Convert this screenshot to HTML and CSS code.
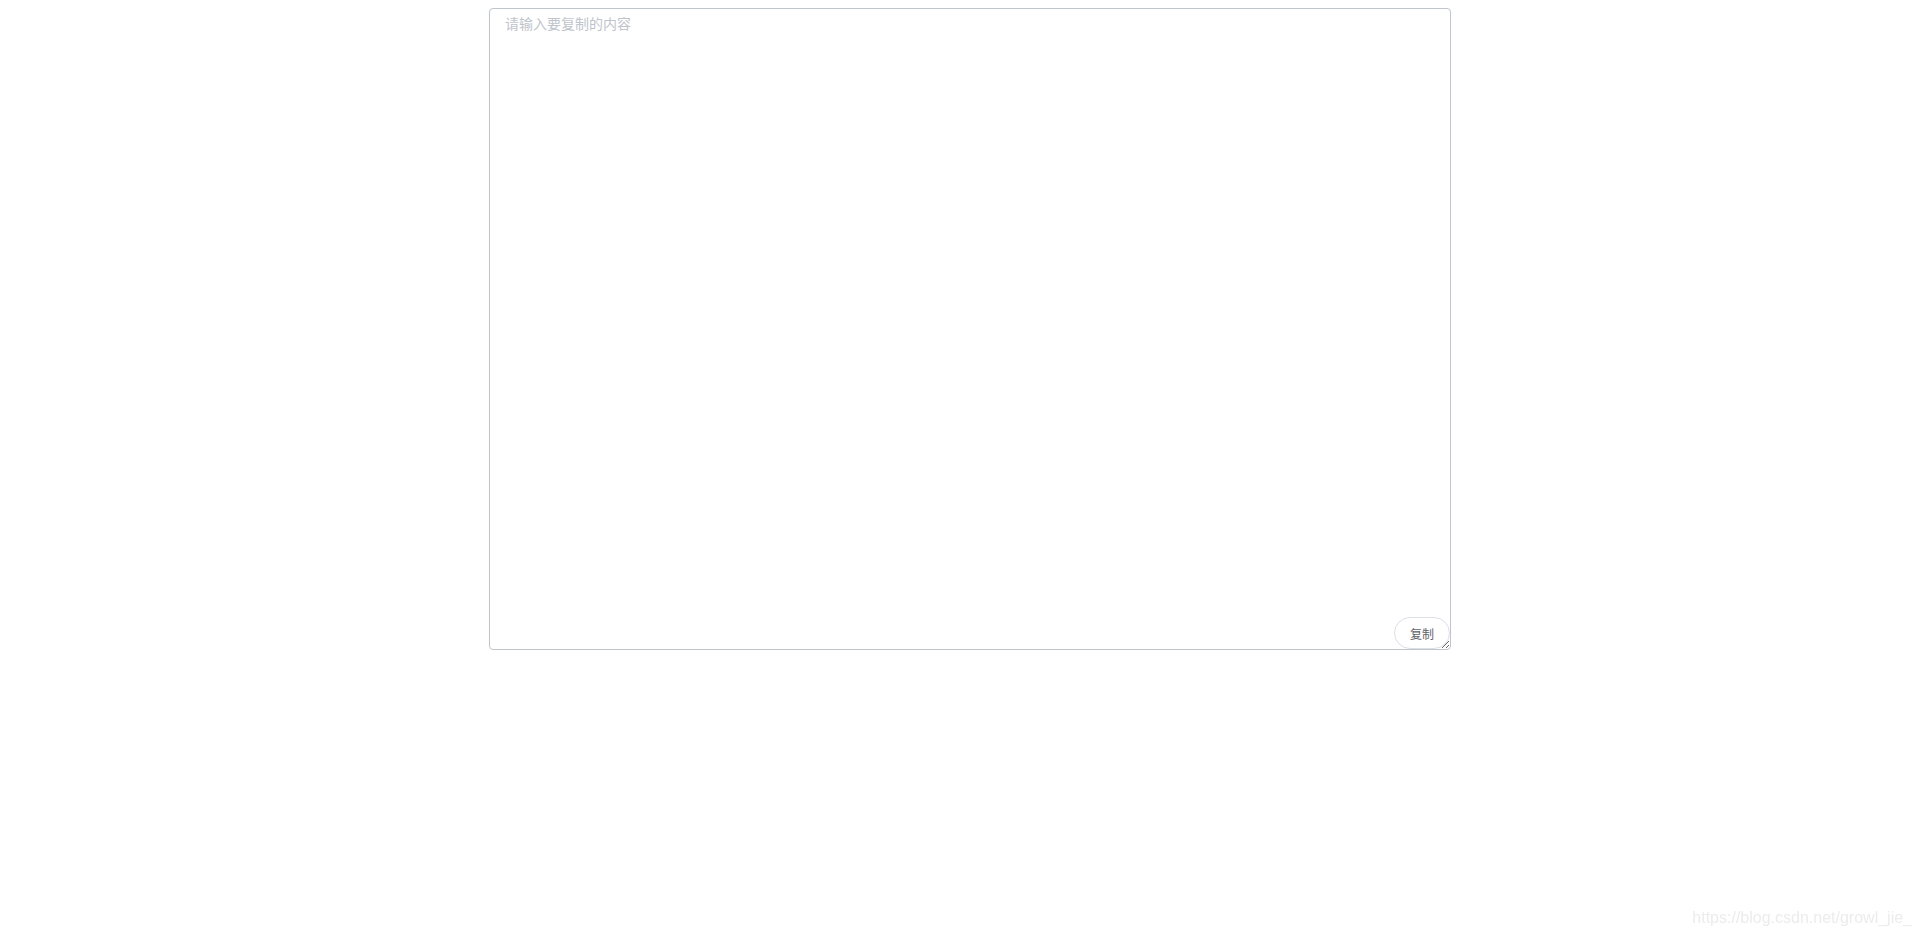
FILE: index.html
```html
<!DOCTYPE html>
<html lang="zh">
<head>
<meta charset="utf-8">
<title>复制</title>
<link rel="stylesheet" href="styles.css">
</head>
<body>
<div class="wrap">
  <textarea class="input" placeholder="请输入要复制的内容"></textarea>
  <button class="copy-btn" type="button">复制</button>
</div>
<div class="watermark">https://blog.csdn.net/growl_jie_</div>
</body>
</html>
```
FILE: styles.css
```css
html, body {
  margin: 0;
  padding: 0;
  background: #ffffff;
  font-family: "Liberation Sans", "Noto Sans CJK SC", sans-serif;
}
body {
  padding: 8px 0 0 489px;
  height: 937px;
  box-sizing: border-box;
}
.wrap {
  position: relative;
  width: 962px;
  height: 642px;
}
.input {
  display: block;
  box-sizing: border-box;
  width: 962px;
  height: 642px;
  margin: 0;
  padding: 5px 15px;
  border: 1px solid #c0c4cc;
  border-radius: 4px;
  font-family: "Liberation Sans", "Noto Sans CJK SC", sans-serif;
  font-size: 14px;
  line-height: 1.5;
  color: #606266;
  outline: none;
  resize: both;
}
.input::placeholder {
  color: #c0c4cc;
}
.copy-btn {
  position: absolute;
  right: 1px;
  bottom: 1px;
  box-sizing: border-box;
  width: 56px;
  height: 32px;
  padding: 0;
  border: 1px solid #dcdfe6;
  border-radius: 20px;
  background: #ffffff;
  color: #606266;
  font-family: "Liberation Sans", "Noto Sans CJK SC", sans-serif;
  font-size: 12px;
  cursor: pointer;
}
.watermark {
  position: fixed;
  right: 8px;
  bottom: 10px;
  font-family: "Liberation Sans", sans-serif;
  font-size: 16px;
  color: #ececec;
}
```
